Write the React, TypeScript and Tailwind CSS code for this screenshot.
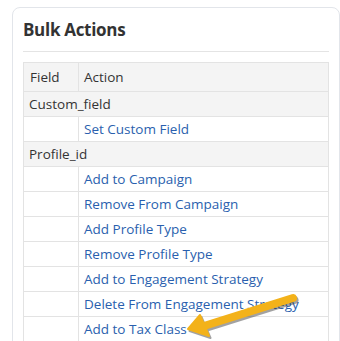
import React from "react";

const rows: { type: "group" | "item"; label: string }[] = [
  { type: "group", label: "Custom_field" },
  { type: "item", label: "Set Custom Field" },
  { type: "group", label: "Profile_id" },
  { type: "item", label: "Add to Campaign" },
  { type: "item", label: "Remove From Campaign" },
  { type: "item", label: "Add Profile Type" },
  { type: "item", label: "Remove Profile Type" },
  { type: "item", label: "Add to Engagement Strategy" },
  { type: "item", label: "Delete From Engagement Strategy" },
  { type: "item", label: "Add to Tax Class" },
];

export default function App() {
  return (
    <div
      className="relative w-[340px] h-[341px] overflow-hidden bg-white text-[#333]"
      style={{ fontFamily: '"Open Sans", "Noto Sans", sans-serif' }}
    >
      <div className="ml-[12px] mt-[7px] w-[328px] h-[400px] rounded-[8px] border border-[#e2e5ea] bg-white px-[10px]">
        <div className="pt-[10px] pb-[9px] border-b border-[#e4e4e4]">
          <h2 className="text-[17px] font-bold leading-[24px] tracking-[-0.3px] text-[#333]">Bulk Actions</h2>
        </div>
        <table className="mt-[10px] w-[306px] border-collapse text-[13.5px] leading-[18px]">
          <thead>
            <tr className="bg-[#f4f4f4]">
              <th className="h-[29px] w-[55px] border border-[#e3e3e3] px-[6px] text-left font-normal">Field</th>
              <th className="h-[29px] border border-[#e3e3e3] px-[5px] text-left font-normal">Action</th>
            </tr>
          </thead>
          <tbody>
            {rows.map((r, i) =>
              r.type === "group" ? (
                <tr key={i} className="bg-[#f4f4f4]">
                  <td colSpan={2} className="h-[25px] border border-[#e3e3e3] px-[5px] p-0">{r.label}</td>
                </tr>
              ) : (
                <tr key={i} className="bg-white">
                  <td className="h-[25px] border border-[#e3e3e3]"></td>
                  <td className="h-[25px] border border-[#e3e3e3] px-[5px] text-[#2a5fae]">{r.label}</td>
                </tr>
              )
            )}
          </tbody>
        </table>
      </div>
      <svg className="absolute left-0 top-0" width="340" height="341" viewBox="0 0 340 341">
        <g transform="translate(1.5,2)" opacity="0.45">
          <line x1="293" y1="298" x2="204" y2="326" stroke="#333" strokeWidth="8" strokeLinecap="round" />
          <polygon points="188,329 200,315 209,336" fill="#333" stroke="#333" strokeWidth="2" strokeLinejoin="round" />
        </g>
        <line x1="293" y1="298" x2="204" y2="326" stroke="#f3b21a" strokeWidth="8" strokeLinecap="round" />
        <polygon points="188,329 200,315 209,336" fill="#f3b21a" stroke="#f3b21a" strokeWidth="2" strokeLinejoin="round" />
      </svg>
    </div>
  );
}
